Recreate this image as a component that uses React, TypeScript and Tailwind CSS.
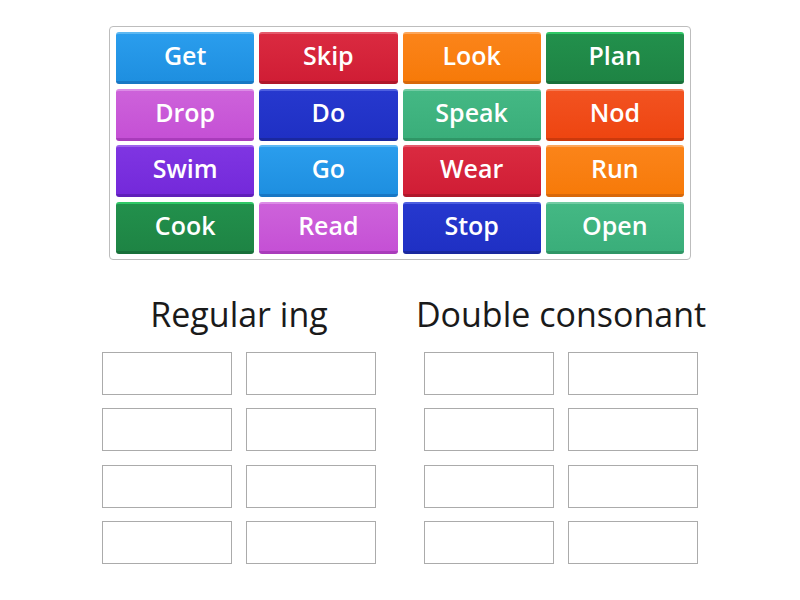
import React from 'react';

type Tile = { label: string; cls: string };

const blue = 'bg-linear-to-b from-[#2a9ded] to-[#1e8fe0] border-t-[#5cb8f2] border-b-[#1877c4]';
const red = 'bg-linear-to-b from-[#da2a40] to-[#d01d35] border-t-[#e45a6b] border-b-[#b0172b]';
const orange = 'bg-linear-to-b from-[#fb8419] to-[#f77a08] border-t-[#fca65a] border-b-[#d8680a]';
const green = 'bg-linear-to-b from-[#22904c] to-[#1e8444] border-t-[#2fc866] border-b-[#18703a]';
const magenta = 'bg-linear-to-b from-[#cd62da] to-[#c550d5] border-t-[#dc8ce6] border-b-[#a93cbb]';
const indigo = 'bg-linear-to-b from-[#2638ce] to-[#1f30c4] border-t-[#4d5fe0] border-b-[#1a289f]';
const teal = 'bg-linear-to-b from-[#44b884] to-[#3aae7a] border-t-[#72cca3] border-b-[#2f9666]';
const redOrange = 'bg-linear-to-b from-[#f25220] to-[#ee4510] border-t-[#f67c55] border-b-[#cc390c]';
const purple = 'bg-linear-to-b from-[#7f35e2] to-[#7429da] border-t-[#9d63ec] border-b-[#5f1fba]';

const tiles: Tile[] = [
  { label: 'Get', cls: blue },
  { label: 'Skip', cls: red },
  { label: 'Look', cls: orange },
  { label: 'Plan', cls: green },
  { label: 'Drop', cls: magenta },
  { label: 'Do', cls: indigo },
  { label: 'Speak', cls: teal },
  { label: 'Nod', cls: redOrange },
  { label: 'Swim', cls: purple },
  { label: 'Go', cls: blue },
  { label: 'Wear', cls: red },
  { label: 'Run', cls: orange },
  { label: 'Cook', cls: green },
  { label: 'Read', cls: magenta },
  { label: 'Stop', cls: indigo },
  { label: 'Open', cls: teal },
];

function DropGroup({ title }: { title: string }) {
  return (
    <div className="w-[274px] flex flex-col items-center">
      <h2 className="text-[34px] leading-[44px] text-[#1a1a1a] whitespace-nowrap">{title}</h2>
      <div className="mt-[16px] grid grid-cols-[130px_130px] gap-x-[14px] gap-y-[13.5px]">
        {Array.from({ length: 8 }).map((_, i) => (
          <div key={i} className="h-[43px] border border-[#ababab] bg-white" />
        ))}
      </div>
    </div>
  );
}

export default function App() {
  return (
    <div className="w-[800px] h-[600px] bg-white font-['Open_Sans',sans-serif] flex flex-col items-center pt-[26px]">
      <div className="w-[582px] border border-[#bdbdbd] rounded-[4px] px-[6px] pt-[5px] pb-[5px] grid grid-cols-4 gap-x-[5px] gap-y-[4.5px]">
        {tiles.map((t) => (
          <div
            key={t.label}
            className={`h-[52px] rounded-[3px] border-t-2 border-b-[3px] flex items-center justify-center text-white text-[25px] font-semibold leading-none pb-[4px] ${t.cls}`}
          >
            {t.label}
          </div>
        ))}
      </div>
      <div className="mt-[32px] flex gap-[48px]">
        <DropGroup title="Regular ing" />
        <DropGroup title="Double consonant" />
      </div>
    </div>
  );
}
